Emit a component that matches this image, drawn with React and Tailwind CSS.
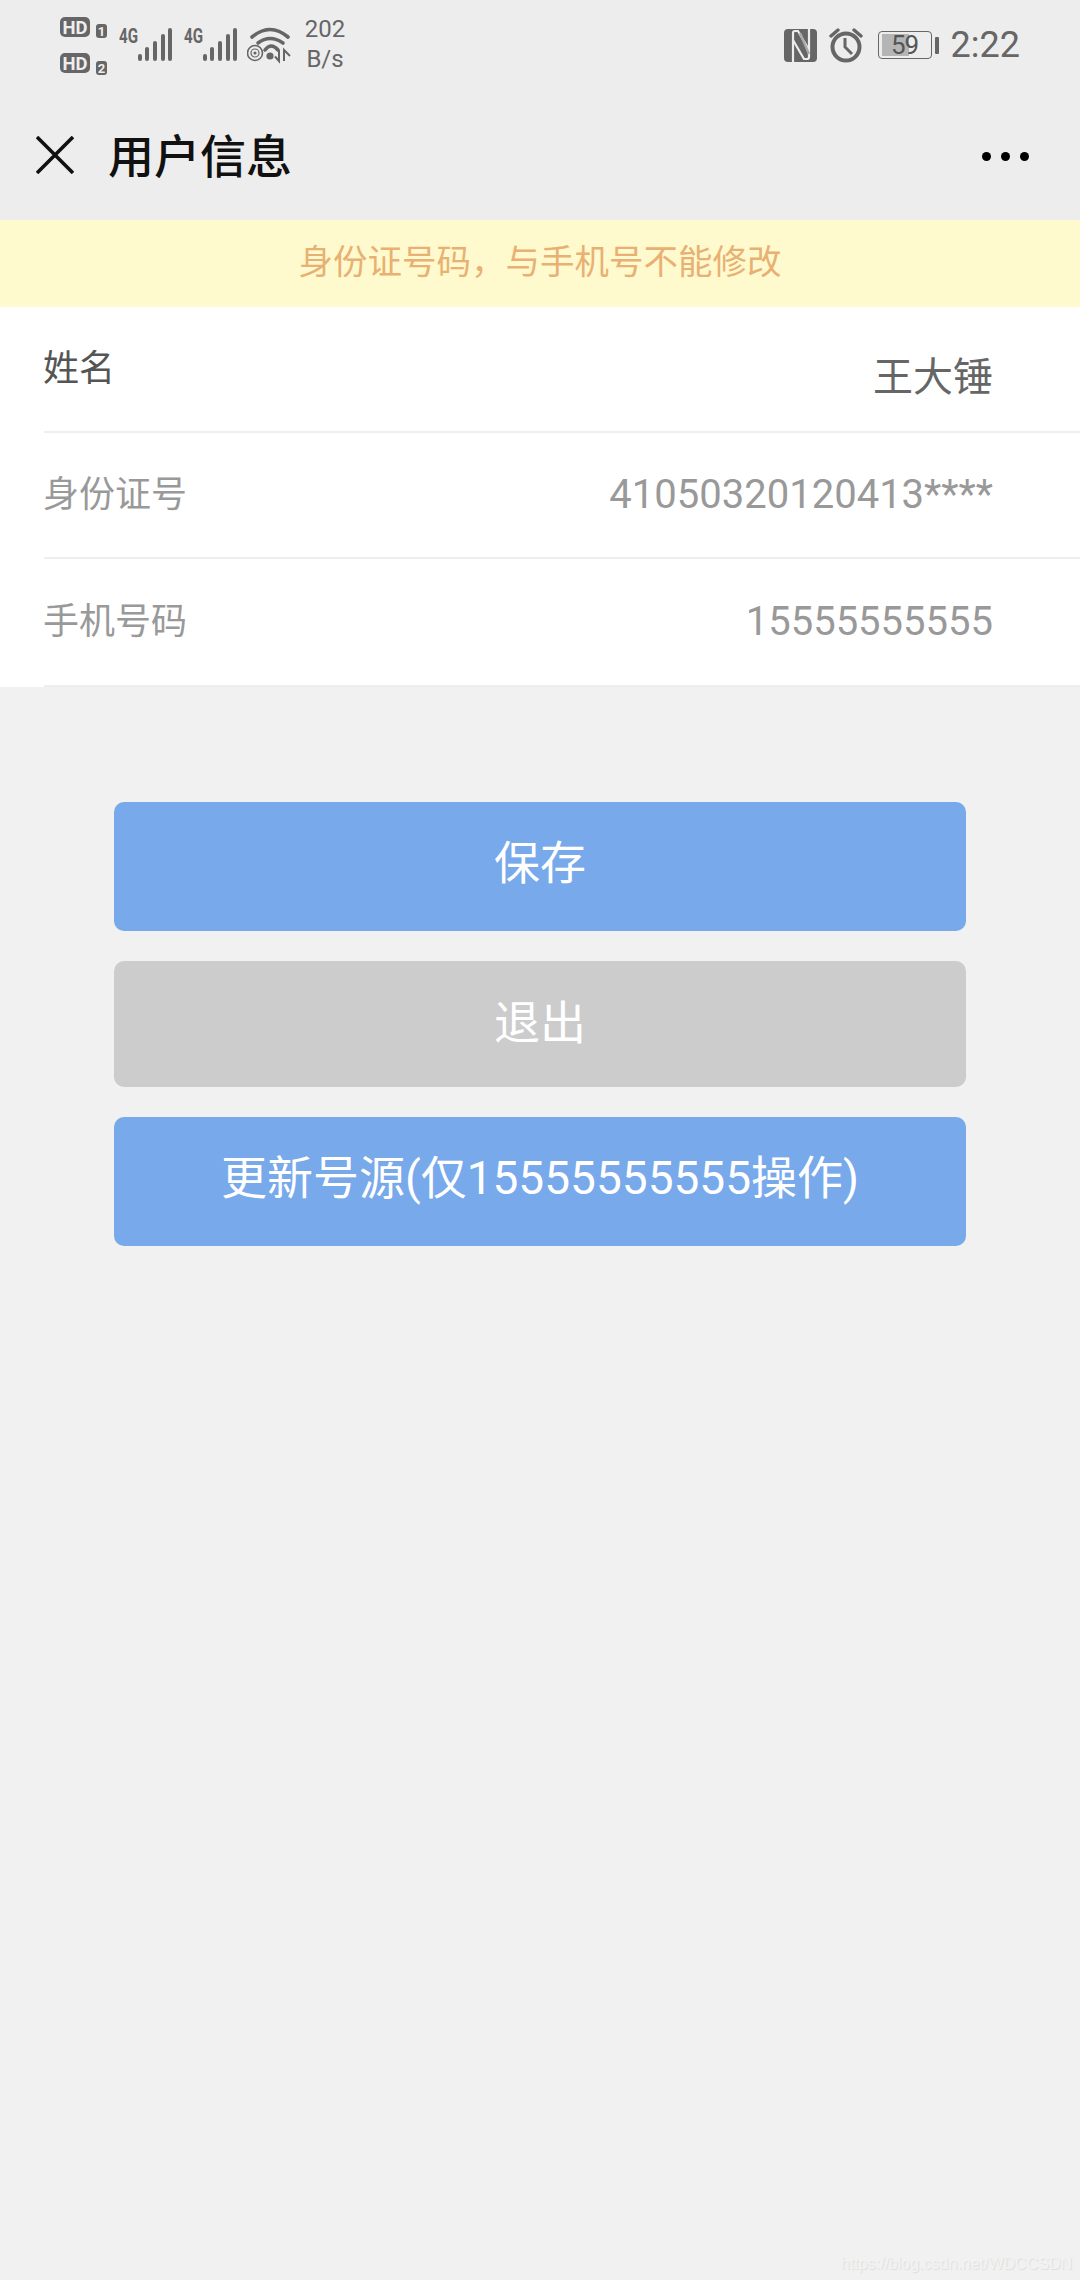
const HdBadges = () => (
  <svg width="47" height="90" viewBox="0 0 47 90" className="shrink-0">
    {[{ y: 17, by: 24, n: '1' }, { y: 53, by: 61, n: '2' }].map((b) => (
      <g key={b.n} fontFamily="Roboto, sans-serif" fontWeight="700" textAnchor="middle">
        <rect x="0" y={b.y} width="30" height="20" rx="5" fill="#666" />
        <text x="15" y={b.y + 16.5} fontSize="19" fill="#eee" textLength="25" lengthAdjust="spacingAndGlyphs">HD</text>
        <rect x="36" y={b.by} width="11" height="14" rx="3" fill="#666" />
        <text x="41.5" y={b.by + 12} fontSize="13" fill="#eee">{b.n}</text>
      </g>
    ))}
  </svg>
)

const Signal = () => (
  <svg width="53" height="90" viewBox="0 0 53 90" className="shrink-0">
    <text x="0" y="43" fontFamily="Roboto, sans-serif" fontWeight="700" fontSize="21" fill="#666" textLength="19" lengthAdjust="spacingAndGlyphs">4G</text>
    <rect x="19" y="54" width="4" height="7" rx="2" fill="#666" />
    <rect x="26" y="47" width="4" height="14" rx="2" fill="#666" />
    <rect x="34" y="41" width="4" height="20" rx="2" fill="#666" />
    <rect x="42" y="34" width="4" height="27" rx="2" fill="#666" />
    <rect x="49" y="28" width="4" height="33" rx="2" fill="#666" />
  </svg>
)

const Wifi = () => (
  <svg width="44" height="90" viewBox="0 0 44 90" fill="none" className="shrink-0">
    <path d="M5 37 Q23 22 41 37" stroke="#666" strokeWidth="3.6" strokeLinecap="round" />
    <path d="M11 43 Q23 34 36 43" stroke="#666" strokeWidth="3.6" strokeLinecap="round" />
    <path d="M18 50 Q24 42 31 50" stroke="#666" strokeWidth="3.6" strokeLinecap="round" />
    <circle cx="8" cy="53" r="7.5" stroke="#666" strokeWidth="1.6" />
    <circle cx="8" cy="53" r="4" stroke="#666" strokeWidth="1.2" />
    <circle cx="8" cy="53" r="1.6" fill="#666" />
    <circle cx="23" cy="56" r="3.6" fill="#666" />
    <path d="M32 50 V61 L28 56.5 M37 61 V50 L43 56" stroke="#666" strokeWidth="2" />
  </svg>
)

const NfcIcon = () => (
  <svg width="33" height="90" viewBox="0 0 33 90" fill="none" className="shrink-0">
    <rect x="0" y="29" width="33" height="33" rx="4" fill="#666" />
    <path d="M9 62 V33 Q9 31 11 31 H14 L25 50" stroke="#ededed" strokeWidth="2.2" />
    <path d="M25 29 V57 Q25 59 23 59 H20 L9 40" stroke="#ededed" strokeWidth="2.2" />
    <path d="M16 33 L25 54" stroke="#a8a8a8" strokeWidth="2.4" />
  </svg>
)

const AlarmIcon = () => (
  <svg width="34" height="90" viewBox="0 0 34 90" fill="none" className="shrink-0">
    <circle cx="17" cy="47" r="13.5" stroke="#666" strokeWidth="4" />
    <path d="M16 38 V47 L23 54" stroke="#666" strokeWidth="3" />
    <path d="M2 36 L9 30 M32 36 L25 30" stroke="#666" strokeWidth="3.4" strokeLinecap="round" />
  </svg>
)

const Battery = () => (
  <div className="flex items-center gap-[3px] shrink-0">
    <div className="relative w-[54px] h-[28px] rounded-[4px] border-[1.5px] border-[#666]">
      <div className="absolute left-[3px] top-[2px] bottom-[2px] w-[27px] bg-[#b5b5b5]" />
      <span className="absolute inset-0 flex items-center justify-center text-[26px] leading-none text-[#555] tracking-[-1px]">59</span>
    </div>
    <div className="w-[4px] h-[17px] rounded-[1px] bg-[#666]" />
  </div>
)

const Row = ({ label, value, height = 'h-[126px]', labelColor = 'text-[#999]', valueClass = 'text-[#999]' }) => (
  <div className={`ml-[44px] ${height} flex items-center justify-between pr-[87px] border-b-2 border-[#eeeeee]`}>
    <span className={`text-[36px] -ml-[1px] leading-none ${labelColor}`}>{label}</span>
    <span className={`text-[40px] leading-none ${valueClass}`}>{value}</span>
  </div>
)

export default function App() {
  return (
    <div className="relative w-[1080px] h-[2280px] bg-[#f1f1f1] font-['Roboto','Noto_Sans_CJK_SC',sans-serif] overflow-hidden">
      {/* status bar + nav */}
      <header className="bg-[#ededed] h-[220px]">
        <div className="h-[90px] flex items-center pl-[60px] pr-[60px]">
          <HdBadges />
          <div className="w-[12px]" />
          <Signal />
          <div className="w-[12px]" />
          <Signal />
          <div className="w-[10px]" />
          <Wifi />
          <div className="ml-[14px] w-[40px] flex flex-col items-center text-[24px] leading-[30px] text-[#666] pb-[2px]">
            <span>202</span>
            <span>B/s</span>
          </div>
          <div className="ml-auto flex items-center">
            <NfcIcon />
            <div className="w-[12px]" />
            <AlarmIcon />
            <div className="w-[15px]" />
            <Battery />
            <span className="ml-[12px] text-[36px] leading-none text-[#666]">2:22</span>
          </div>
        </div>
        <div className="h-[130px] flex items-center pl-[36px] pr-[51px]">
          <svg width="38" height="38" viewBox="0 0 38 38" fill="none" className="shrink-0 -mt-[1px]">
            <path d="M1 1 L37 37 M37 1 L1 37" stroke="#111" strokeWidth="3.6" />
          </svg>
          <h1 className="ml-[34px] mt-[3px] text-[46px] leading-none font-medium text-[#111]">用户信息</h1>
          <div className="ml-auto flex gap-[10px] mt-[2px]">
            <span className="w-[9px] h-[9px] rounded-full bg-black" />
            <span className="w-[9px] h-[9px] rounded-full bg-black" />
            <span className="w-[9px] h-[9px] rounded-full bg-black" />
          </div>
        </div>
      </header>

      {/* notice */}
      <div className="h-[87px] bg-[#fffacd] flex items-center justify-center pb-[3px] text-[34.5px] leading-none text-[#e8b173]">
        身份证号码，与手机号不能修改
      </div>

      {/* info rows */}
      <div className="bg-white h-[380px]">
        <Row
          label="姓名"
          value={<span className="relative top-[9px] text-[40px]">王大锤</span>}
          labelColor="text-[#555]"
          valueClass="text-[#666]"
        />
        <Row label="身份证号" value="41050320120413****" />
        <Row label="手机号码" value="15555555555" height="h-[128px]" />
      </div>

      {/* actions */}
      <div className="mt-[115px] ml-[114px] w-[852px] flex flex-col">
        <button className="h-[129px] rounded-[10px] bg-[#78a9eb] text-white text-[46px] leading-none pb-[8px]">保存</button>
        <button className="mt-[30px] h-[126px] rounded-[10px] bg-[#cccccc] text-white text-[46px] leading-none pb-[2px]">退出</button>
        <button className="mt-[30px] h-[129px] rounded-[10px] bg-[#78a9eb] text-white text-[46px] leading-none pb-[8px]">更新号源(仅15555555555操作)</button>
      </div>

      <span className="absolute right-[8px] bottom-[8px] text-[16px] leading-none font-['Liberation_Sans',sans-serif] text-[#f3f3f3] [text-shadow:1px_1px_1px_#dcdcdc]">
        https://blog.csdn.net/WDCCSDN
      </span>
    </div>
  )
}
